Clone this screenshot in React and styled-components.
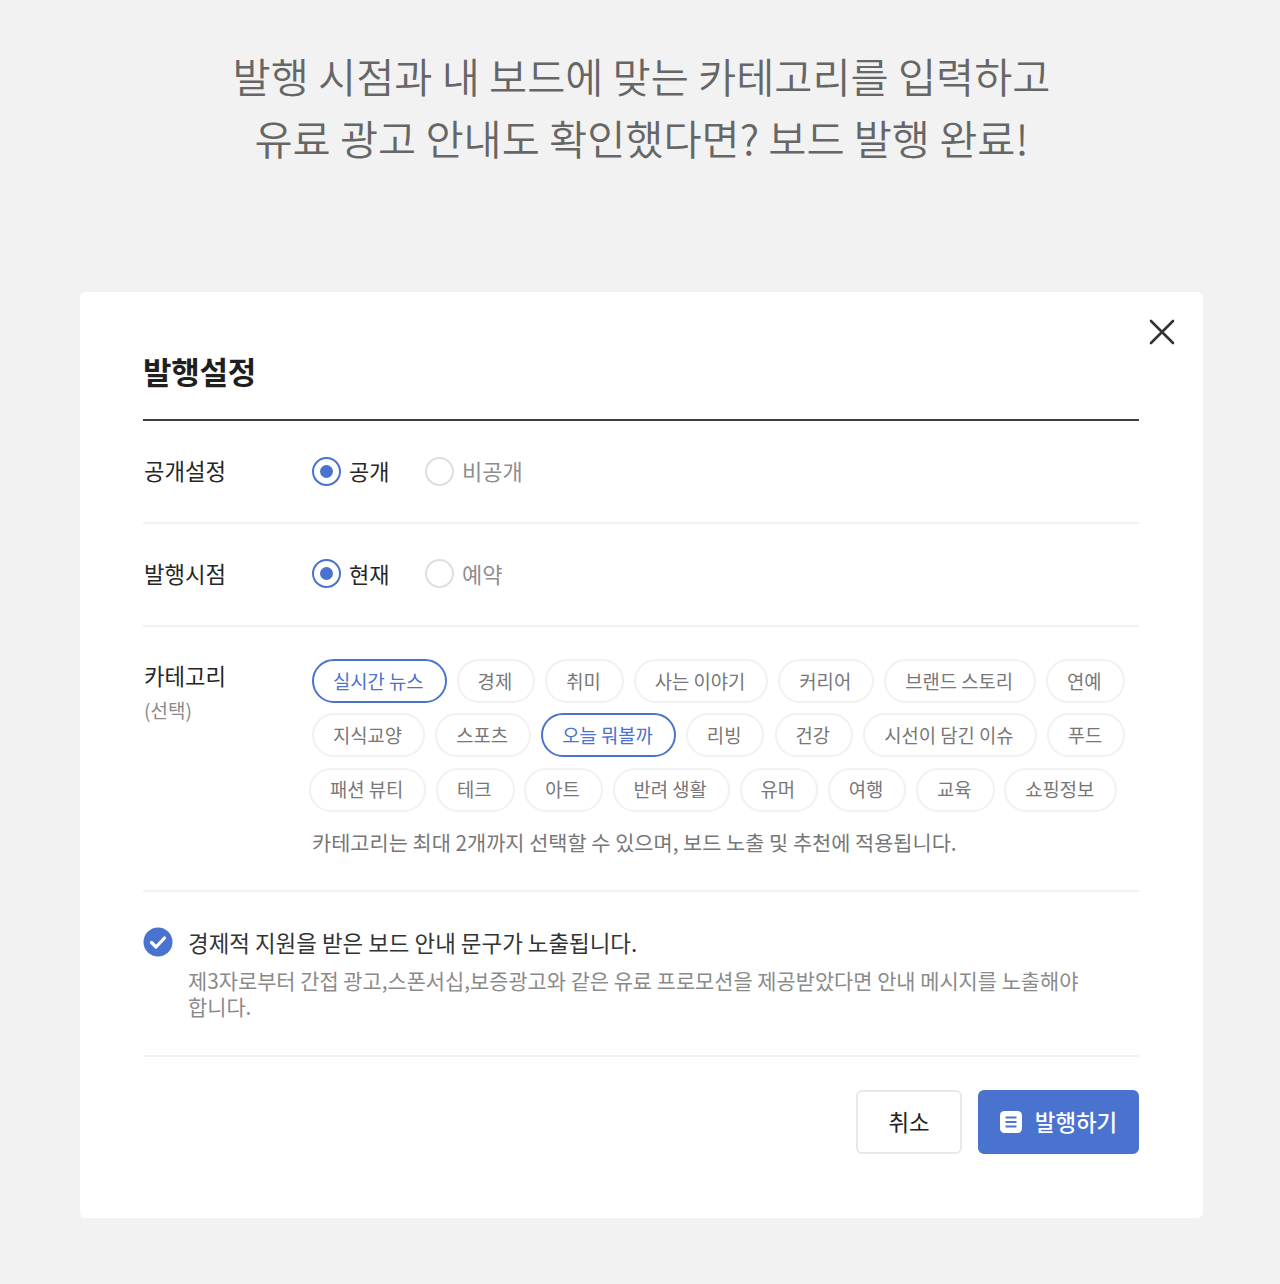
import React from "react";
import styled, { createGlobalStyle } from "styled-components";

const Global = createGlobalStyle`
  html, body { margin: 0; padding: 0; background: #f2f2f2; }
  body { font-family: "Noto Sans CJK KR", "Noto Sans", sans-serif; }
  * { box-sizing: border-box; }
`;
const Page = styled.div`
  width: 1280px;
  height: 1284px;
  background: #f2f2f2;
  padding: 45px 77px 66px 80px;
  overflow: hidden;
`;
const Headline = styled.h1`
  margin: 0 0 124px;
  height: 123px;
  font-size: 41.45px;
  line-height: 61.5px;
  font-weight: 350;
  color: #666;
  text-align: center;
  letter-spacing: 0;
`;
const Card = styled.div`
  position: relative;
  width: 1123px;
  height: 926px;
  background: #fff;
  border-radius: 6px;
  padding: 56px 64px 0 63px;
`;
const Close = styled.button`
  position: absolute;
  top: 27px;
  right: 28px;
  width: 26px;
  height: 26px;
  padding: 0;
  border: 0;
  background: none;
  display: block;
  svg { display: block; }
`;
const Title = styled.h2`
  margin: 0;
  height: 73px;
  border-bottom: 2px solid #3f3f3f;
  font-size: 31px;
  line-height: 46px;
  font-weight: 700;
  color: #1f1f1f;
  letter-spacing: -0.3px;
`;
const Row = styled.div`
  display: flex;
  align-items: ${p => (p.$top ? "flex-start" : "center")};
  height: ${p => p.$h}px;
  padding-top: ${p => p.$pt || 0}px;
  padding-bottom: ${p => (p.$top ? 0 : 2)}px;
  border-bottom: 2px solid #f1f1f1;
`;
const Label = styled.div`
  width: 169px;
  flex: none;
  padding-left: 1px;
  padding-bottom: 2px;
  font-size: 22.3px;
  line-height: 32px;
  color: #262626;
  span {
    display: block;
    font-size: 19px;
    line-height: 38px;
    color: #8a8a8a;
  }
`;
const RadioGroup = styled.div`
  display: flex;
  align-items: center;
`;
const RadioItem = styled.label`
  display: flex;
  align-items: center;
  gap: ${p => (p.$on ? 8 : 8)}px;
  margin-right: 35.5px;
  font-size: 22px;
  line-height: 32px;
  color: ${p => (p.$on ? "#262626" : "#8e8e8e")};
`;
const RadioText = styled.span`
  padding-bottom: 2px;
`;
const RadioMark = styled.span`
  width: 29px;
  height: 29px;
  border-radius: 50%;
  border: 2px solid ${p => (p.$on ? "#4a72cf" : "#dedede")};
  display: flex;
  align-items: center;
  justify-content: center;
  &::after {
    content: "";
    display: ${p => (p.$on ? "block" : "none")};
    width: 13px;
    height: 13px;
    border-radius: 50%;
    background: #4a72cf;
  }
`;
const Categories = styled.div`
  display: flex;
  flex-direction: column;
  gap: 10.4px;
`;
const ChipRow = styled.div`
  display: flex;
  gap: ${p => p.$gap}px;
  margin-left: ${p => p.$shift || 0}px;
`;
const Chip = styled.span`
  height: 44px;
  padding: 0 21px 2px 19px;
  border-radius: 22px;
  border: 2px solid ${p => (p.$on ? "#4a72cf" : "#f1f1f1")};
  display: flex;
  align-items: center;
  font-size: 18.8px;
  color: ${p => (p.$on ? "#4a72cf" : "#777")};
  white-space: nowrap;
`;
const Hint = styled.p`
  margin: 5px 0 0;
  font-size: 20.83px;
  line-height: 30px;
  color: #777;
`;
const CheckBlock = styled.div`
  display: flex;
  height: 165px;
  padding-top: 35px;
  gap: 15px;
  border-bottom: 2px solid #f1f1f1;
  svg { display: block; flex: none; }
`;
const CheckText = styled.div`
  flex: 1;
  margin-top: -1px;
`;
const CheckTitle = styled.div`
  font-size: 22.45px;
  line-height: 32px;
  color: #333;
`;
const CheckDesc = styled.p`
  margin: 9px 0 0;
  width: 900px;
  font-size: 20.87px;
  line-height: 26px;
  color: #8a8a8a;
`;
const Actions = styled.div`
  display: flex;
  justify-content: flex-end;
  gap: 16px;
  padding-top: 33px;
`;
const Button = styled.button`
  height: 64px;
  width: ${p => p.$w}px;
  padding: 0 0 3px;
  border-radius: 6px;
  border: 2px solid ${p => (p.$primary ? "#4a72cf" : "#e8e8e8")};
  background: ${p => (p.$primary ? "#4a72cf" : "#fff")};
  color: ${p => (p.$primary ? "#fff" : "#222")};
  font-family: inherit;
  font-size: 22.4px;
  font-weight: ${p => (p.$primary ? 500 : 400)};
  display: flex;
  align-items: center;
  justify-content: center;
  gap: 13px;
  svg { display: block; margin-top: 3px; }
`;

const row1 = [["실시간 뉴스", 1], ["경제"], ["취미"], ["사는 이야기"], ["커리어"], ["브랜드 스토리"], ["연예"]];
const row2 = [["지식교양"], ["스포츠"], ["오늘 뭐볼까", 1], ["리빙"], ["건강"], ["시선이 담긴 이슈"], ["푸드"]];
const row3 = [["패션 뷰티"], ["테크"], ["아트"], ["반려 생활"], ["유머"], ["여행"], ["교육"], ["쇼핑정보"]];

const Chips = ({ items }) => items.map(([t, on]) => <Chip key={t} $on={!!on}>{t}</Chip>);

const Radio = ({ on, children }) => (
  <RadioItem $on={on}>
    <RadioMark $on={on} />
    <RadioText>{children}</RadioText>
  </RadioItem>
);

export default function App() {
  return (
    <Page>
      <Global />
      <Headline>
        발행 시점과 내 보드에 맞는 카테고리를 입력하고
        <br />
        유료 광고 안내도 확인했다면? 보드 발행 완료!
      </Headline>
      <Card>
        <Close aria-label="닫기">
          <svg width="26" height="26" viewBox="0 0 26 26" fill="none">
            <path d="M2 2 L24 24 M24 2 L2 24" stroke="#333" strokeWidth="2.6" strokeLinecap="round" />
          </svg>
        </Close>
        <Title>발행설정</Title>
        <Row $h={103} $pt={1}>
          <Label>공개설정</Label>
          <RadioGroup>
            <Radio on>공개</Radio>
            <Radio>비공개</Radio>
          </RadioGroup>
        </Row>
        <Row $h={103}>
          <Label>발행시점</Label>
          <RadioGroup>
            <Radio on>현재</Radio>
            <Radio>예약</Radio>
          </RadioGroup>
        </Row>
        <Row $h={265} $top $pt={32}>
          <Label>
            카테고리
            <span>(선택)</span>
          </Label>
          <Categories>
            <ChipRow $gap={10}><Chips items={row1} /></ChipRow>
            <ChipRow $gap={10.1}><Chips items={row2} /></ChipRow>
            <ChipRow $gap={9.7} $shift={-3}><Chips items={row3} /></ChipRow>
            <Hint>카테고리는 최대 2개까지 선택할 수 있으며, 보드 노출 및 추천에 적용됩니다.</Hint>
          </Categories>
        </Row>
        <CheckBlock>
          <svg width="30" height="30" viewBox="0 0 30 30">
            <circle cx="15" cy="15" r="14.5" fill="#4a72cf" />
            <path d="M8.5 15.5 L13 20 L21.5 11" fill="none" stroke="#fff" strokeWidth="3.2" strokeLinecap="round" strokeLinejoin="round" />
          </svg>
          <CheckText>
            <CheckTitle>경제적 지원을 받은 보드 안내 문구가 노출됩니다.</CheckTitle>
            <CheckDesc>제3자로부터 간접 광고,스폰서십,보증광고와 같은 유료 프로모션을 제공받았다면 안내 메시지를 노출해야 합니다.</CheckDesc>
          </CheckText>
        </CheckBlock>
        <Actions>
          <Button $w={106}>취소</Button>
          <Button $primary $w={161}>
            <svg width="22" height="22" viewBox="0 0 22 22">
              <rect width="22" height="22" rx="4.5" fill="#fff" />
              <path d="M5.5 6.5 H16.5 M5.5 11 H16.5 M5.5 15.5 H16.5" stroke="#4a72cf" strokeWidth="2" />
            </svg>
            발행하기
          </Button>
        </Actions>
      </Card>
    </Page>
  );
}
